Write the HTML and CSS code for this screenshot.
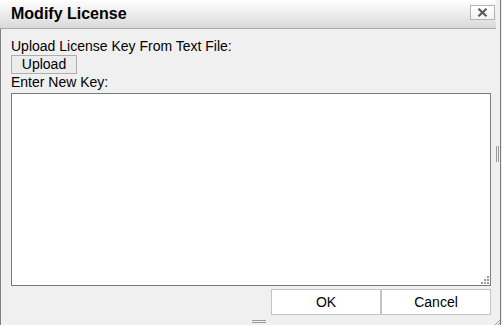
FILE: index.html
```html
<!DOCTYPE html>
<html>
<head>
<meta charset="utf-8">
<link rel="stylesheet" href="styles.css">
</head>
<body>
<div class="dialog">
  <div class="titlebar">
    <span class="title">Modify License</span>
    <button class="close" type="button" aria-label="Close">
      <svg width="11" height="9" viewBox="0 0 11 9"><path d="M1.5 0.8 L9.5 8.2 M9.5 0.8 L1.5 8.2" stroke="#5a5a5a" stroke-width="2.2" fill="none"/></svg>
    </button>
  </div>
  <div class="content">
    <div class="label">Upload License Key From Text File:</div>
    <button class="upload" type="button">Upload</button>
    <div class="label">Enter New Key:</div>
    <div class="keywrap">
      <textarea class="key"></textarea>
      <svg class="grip" width="8" height="8" viewBox="0 0 8 8">
        <rect x="6" y="0" width="2" height="2" fill="#9a9a9a"/>
        <rect x="3" y="3" width="2" height="2" fill="#9a9a9a"/>
        <rect x="6" y="3" width="2" height="2" fill="#9a9a9a"/>
        <rect x="0" y="6" width="2" height="2" fill="#9a9a9a"/>
        <rect x="3" y="6" width="2" height="2" fill="#9a9a9a"/>
        <rect x="6" y="6" width="2" height="2" fill="#9a9a9a"/>
      </svg>
    </div>
    <div class="actions">
      <button class="btn" type="button">OK</button>
      <button class="btn" type="button">Cancel</button>
    </div>
    <div class="handle-right"></div>
    <div class="handle-bottom"></div>
    <svg class="corner" width="6" height="6" viewBox="0 0 6 6"><path d="M6 1 L1 6 M6 4 L4 6" stroke="#9a9a9a" stroke-width="1" fill="none"/></svg>
  </div>
</div>
</body>
</html>
```

FILE: styles.css
```css
html, body {
  margin: 0;
  padding: 0;
  background: #f0f0f0;
}
body {
  font-family: "Liberation Sans", Arial, sans-serif;
  font-size: 14px;
  color: #000;
}
.dialog {
  box-sizing: border-box;
  width: 501px;
  height: 325px;
  border-right: 1px solid #7a7a7a;
  display: flex;
  flex-direction: column;
  background: #f0f0f0;
  overflow: hidden;
}
.titlebar {
  box-sizing: border-box;
  width: 496px;
  height: 29px;
  flex: none;
  border-bottom: 1px solid #a8a8a8;
  background: linear-gradient(#ffffff, #d9d9d9);
  display: flex;
  align-items: flex-start;
  justify-content: space-between;
  padding-left: 11px;
}
.title {
  font-weight: bold;
  font-size: 16px;
  line-height: 28px;
}
.close {
  box-sizing: border-box;
  width: 25px;
  height: 15px;
  margin: 5px 1px 0 0;
  padding: 0;
  border: 1px solid #b3b3b3;
  background: linear-gradient(#ffffff, #f2f2f2);
  display: flex;
  align-items: center;
  justify-content: center;
}
.content {
  flex: 1;
  position: relative;
  border-left: 1px solid #7f7f7f;
  padding: 9px 0 0 10px;
}
.label {
  line-height: 16px;
  height: 16px;
  white-space: nowrap;
}
.upload {
  display: block;
  box-sizing: border-box;
  width: 66px;
  height: 19px;
  margin: 1px 0 0 0;
  padding: 0;
  border: 1px solid #adadad;
  background: #ececec;
  font-family: inherit;
  font-size: 14px;
  line-height: 17px;
  color: #000;
}
.keywrap {
  position: relative;
  width: 480px;
  height: 193px;
  margin-top: 3px;
}
.key {
  display: block;
  box-sizing: border-box;
  width: 480px;
  height: 193px;
  margin: 0;
  border: 1px solid #7a7a7a;
  background: #fff;
  resize: none;
  outline: none;
}
.grip {
  position: absolute;
  right: 2px;
  bottom: 2px;
}
.actions {
  width: 480px;
  display: flex;
  justify-content: flex-end;
  margin-top: 3px;
}
.btn {
  box-sizing: border-box;
  width: 110px;
  height: 26px;
  margin: 0;
  padding: 0;
  border: 1px solid #c4c4c4;
  background: #fff;
  font-family: inherit;
  font-size: 14px;
  color: #000;
}
.handle-right {
  position: absolute;
  left: 495px;
  top: 117px;
  width: 1px;
  height: 16px;
  border-left: 1px solid #9a9a9a;
  border-right: 1px solid #9a9a9a;
}
.handle-bottom {
  position: absolute;
  left: 251px;
  top: 291px;
  width: 14px;
  height: 1px;
  border-top: 1px solid #9a9a9a;
  border-bottom: 1px solid #9a9a9a;
}
.corner {
  position: absolute;
  right: 0;
  bottom: 0;
}
```
